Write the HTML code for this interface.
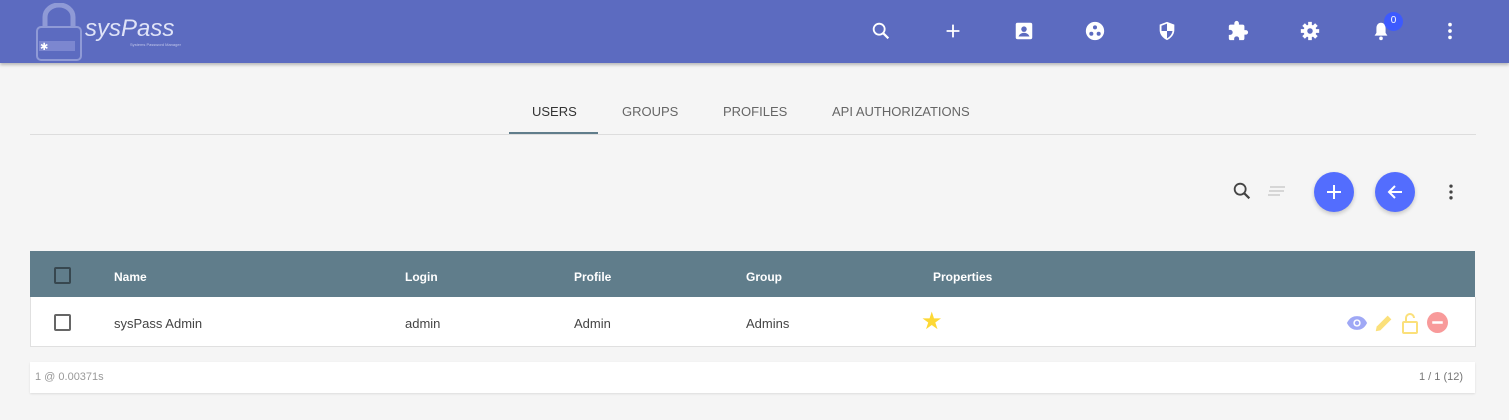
<!DOCTYPE html>
<html><head><style>
body{margin:0;width:1509px;height:420px;background:#f5f5f5;font-family:"Liberation Sans",sans-serif;position:relative;overflow:hidden}
.hdr{position:absolute;left:0;top:0;width:1509px;height:63px;background:#5c6bc0;box-shadow:0 2px 3px rgba(0,0,0,.25)}
.ab{position:absolute}
.ic{position:absolute;top:20px}
.tab{position:absolute;top:104px;font-size:13px;color:#666}
.th{position:absolute;top:270px;font-size:12px;font-weight:bold;color:#fff}
.td{position:absolute;top:316px;font-size:13px;color:#444}
.cb{position:absolute;width:13px;height:13px;border:2px solid #555;border-radius:2px}
</style></head><body>
<div class="hdr">
 <svg class="ab" style="left:35px;top:3px" width="48" height="58" viewBox="0 0 48 58"><path d="M10 24 V14 a14 12 0 0 1 28 0 V24" fill="none" stroke="#8f9ad6" stroke-width="5"/><rect x="2" y="24" width="44" height="33" rx="4" fill="none" stroke="#8f9ad6" stroke-width="2"/><rect x="4" y="38" width="36" height="10" fill="#7c87d0"/><text x="5" y="47" font-size="10" fill="#fff">✱</text></svg>
 <div class="ab" style="left:85px;top:15px;font-size:24px;font-style:italic;color:#dfe3f7">sysPass</div>
 <div class="ab" style="left:130px;top:42px;font-size:4px;color:#c0c6ea">Systems Password Manager</div>
 <svg class="ic" style="left:870px" width="22" height="22" viewBox="0 0 24 24"><circle cx="10" cy="10" r="6" fill="none" stroke="#fff" stroke-width="2"/><path d="M14.5 14.5 L20 20" stroke="#fff" stroke-width="2.4"/></svg>
 <svg class="ic" style="left:942px" width="22" height="22" viewBox="0 0 24 24"><path d="M12 5v14M5 12h14" stroke="#fff" stroke-width="2"/></svg>
 <svg class="ic" style="left:1013px" width="22" height="22" viewBox="0 0 24 24"><rect x="3" y="3" width="18" height="18" rx="2" fill="#fff"/><circle cx="12" cy="10" r="3" fill="#5c6bc0"/><path d="M6 18c1-3 4-4 6-4s5 1 6 4z" fill="#5c6bc0"/></svg>
 <svg class="ic" style="left:1084px" width="22" height="22" viewBox="0 0 24 24"><circle cx="12" cy="12" r="10" fill="#fff"/><circle cx="12" cy="8" r="2.2" fill="#5c6bc0"/><circle cx="8" cy="15" r="2.2" fill="#5c6bc0"/><circle cx="16" cy="15" r="2.2" fill="#5c6bc0"/></svg>
 <svg class="ic" style="left:1156px" width="22" height="22" viewBox="0 0 24 24"><path d="M12 2 L20 5 V11 C20 16 16 20 12 22 C8 20 4 16 4 11 V5 Z" fill="#fff"/><path d="M12 4 V12 H18 C17.5 15.5 15 18.5 12 20 V12 H6 V6.3 Z" fill="#5c6bc0"/></svg>
 <svg class="ic" style="left:1227px" width="22" height="22" viewBox="0 0 24 24"><path d="M20.5 11H19V7a2 2 0 0 0-2-2h-4V3.5a2.5 2.5 0 0 0-5 0V5H4a2 2 0 0 0-2 2v3.8h1.5a2.7 2.7 0 0 1 0 5.4H2V20a2 2 0 0 0 2 2h3.8v-1.5a2.7 2.7 0 0 1 5.4 0V22H17a2 2 0 0 0 2-2v-4h1.5a2.5 2.5 0 0 0 0-5z" fill="#fff"/></svg>
 <svg class="ic" style="left:1299px" width="22" height="22" viewBox="0 0 24 24"><circle cx="12" cy="12" r="7" fill="#fff"/><path d="M12 2v20M2 12h20M5 5l14 14M19 5L5 19" stroke="#fff" stroke-width="4"/><circle cx="12" cy="12" r="3" fill="#5c6bc0"/></svg>
 <svg class="ic" style="left:1370px" width="22" height="22" viewBox="0 0 24 24"><path d="M12 3c-3 0-5 2.5-5 6v5l-2 3h14l-2-3V9c0-3.5-2-6-5-6z" fill="#fff"/><circle cx="12" cy="20" r="2" fill="#fff"/></svg>
 <div class="ab" style="left:1384px;top:12px;width:19px;height:19px;border-radius:50%;background:#3d5afe;color:#fff;font-size:10px;text-align:center;line-height:17px">0</div>
 <svg class="ic" style="left:1439px" width="22" height="22" viewBox="0 0 24 24"><circle cx="12" cy="5" r="2" fill="#fff"/><circle cx="12" cy="12" r="2" fill="#fff"/><circle cx="12" cy="19" r="2" fill="#fff"/></svg>
</div>
<div class="tab" style="left:532px;color:#333">USERS</div>
<div class="tab" style="left:622px">GROUPS</div>
<div class="tab" style="left:723px">PROFILES</div>
<div class="tab" style="left:832px">API AUTHORIZATIONS</div>
<div class="ab" style="left:30px;top:134px;width:1446px;height:1px;background:#ddd"></div>
<div class="ab" style="left:509px;top:132px;width:89px;height:2px;background:#607d8b"></div>
<svg class="ab" style="left:1231px;top:180px" width="22" height="22" viewBox="0 0 24 24"><circle cx="10" cy="10" r="6" fill="none" stroke="#444" stroke-width="2"/><path d="M14.5 14.5 L20 20" stroke="#444" stroke-width="2.4"/></svg>
<svg class="ab" style="left:1267px;top:184px" width="20" height="14" viewBox="0 0 20 14"><path d="M3 3h15M2 7h15M1 11h12" stroke="#ccc" stroke-width="1.6"/></svg>
<div class="ab" style="left:1314px;top:172px;width:40px;height:40px;border-radius:50%;background:#536dfe;box-shadow:0 2px 4px rgba(0,0,0,.2)"><svg style="position:absolute;left:10px;top:10px" width="20" height="20" viewBox="0 0 20 20"><path d="M10 3v14M3 10h14" stroke="#fff" stroke-width="2"/></svg></div>
<div class="ab" style="left:1375px;top:172px;width:40px;height:40px;border-radius:50%;background:#536dfe;box-shadow:0 2px 4px rgba(0,0,0,.2)"><svg style="position:absolute;left:10px;top:10px" width="20" height="20" viewBox="0 0 20 20"><path d="M17 10H4M10 4L4 10l6 6" fill="none" stroke="#fff" stroke-width="2"/></svg></div>
<svg class="ab" style="left:1441px;top:182px" width="20" height="20" viewBox="0 0 24 24"><circle cx="12" cy="5" r="2" fill="#444"/><circle cx="12" cy="12" r="2" fill="#444"/><circle cx="12" cy="19" r="2" fill="#444"/></svg>
<div class="ab" style="left:30px;top:251px;width:1445px;height:46px;background:#607d8b"></div>
<div class="ab" style="left:30px;top:297px;width:1444px;height:49px;background:#fff;border:1px solid #e0e0e0;border-top:none"></div>
<div class="cb" style="left:54px;top:267px;border-color:#37474f"></div>
<div class="th" style="left:114px">Name</div><div class="th" style="left:405px">Login</div><div class="th" style="left:574px">Profile</div><div class="th" style="left:746px">Group</div><div class="th" style="left:933px">Properties</div>
<div class="cb" style="left:54px;top:314px;border-color:#666"></div>
<div class="td" style="left:114px">sysPass Admin</div><div class="td" style="left:405px">admin</div><div class="td" style="left:574px">Admin</div><div class="td" style="left:746px">Admins</div>
<div class="ab" style="left:921px;top:307px;font-size:24px;color:#fdd835">★</div>
<svg class="ab" style="left:1345px;top:312px" width="24" height="22" viewBox="0 0 24 24"><path d="M1 12C4 6 8 4.5 12 4.5S20 6 23 12c-3 6-7 7.5-11 7.5S4 18 1 12z" fill="#9fa8f5"/><circle cx="12" cy="12" r="4" fill="#fff"/><circle cx="12" cy="12" r="2.4" fill="#9fa8f5"/></svg>
<svg class="ab" style="left:1373px;top:312px" width="22" height="22" viewBox="0 0 24 24"><path d="M3 21l1-5L16 4l4 4L8 20z" fill="#fbe07a"/></svg>
<svg class="ab" style="left:1400px;top:311px" width="20" height="24" viewBox="0 0 20 24"><path d="M6 11V7a4 4 0 0 1 8 0" fill="none" stroke="#fbe07a" stroke-width="2"/><rect x="3" y="11" width="14" height="11" rx="1" fill="none" stroke="#fbe07a" stroke-width="2"/></svg>
<svg class="ab" style="left:1427px;top:312px" width="21" height="21" viewBox="0 0 20 20"><circle cx="10" cy="10" r="10" fill="#f89a9a"/><path d="M5 10h10" stroke="#fff" stroke-width="2.4"/></svg>
<div class="ab" style="left:30px;top:362px;width:1445px;height:31px;background:#fff;box-shadow:0 1px 2px rgba(0,0,0,.1)"></div>
<div class="ab" style="left:35px;top:371px;font-size:11px;color:#999">1 @ 0.00371s</div>
<div class="ab" style="left:1419px;top:371px;font-size:11px;color:#777">1 / 1 (12)</div>
</body></html>
